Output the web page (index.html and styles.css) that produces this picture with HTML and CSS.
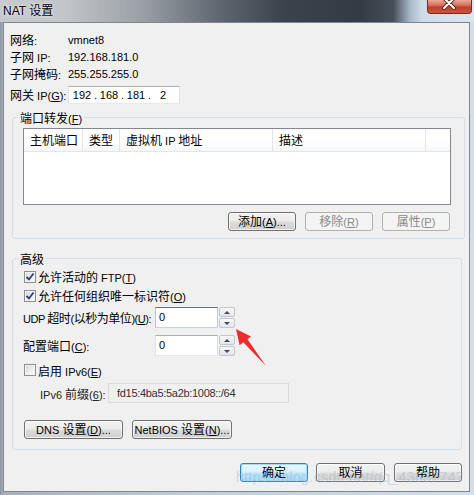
FILE: index.html
```html
<!DOCTYPE html>
<html lang="zh-CN">
<head>
<meta charset="utf-8">
<title>NAT 设置</title>
<link rel="stylesheet" href="styles.css">
</head>
<body>
<div class="window">
  <div class="titlebar">
    <span class="title">NAT <span class="z">设置</span></span>
    <div class="close">
      <svg width="45" height="14" viewBox="0 0 45 14">
        <path d="M17.5 -2 L27.5 8 M27.5 -2 L17.5 8" stroke="#5a2018" stroke-width="4" stroke-linecap="round"/>
        <path d="M17.5 -2 L27.5 8 M27.5 -2 L17.5 8" stroke="#ffffff" stroke-width="2.2" stroke-linecap="round"/>
      </svg>
    </div>
  </div>
  <div class="client">
    <div class="info">
      <div class="row"><span class="lbl"><span class="z">网络</span>:</span><span>vmnet8</span></div>
      <div class="row"><span class="lbl"><span class="z">子网</span> IP:</span><span>192.168.181.0</span></div>
      <div class="row"><span class="lbl"><span class="z">子网掩码</span>:</span><span>255.255.255.0</span></div>
      <div class="row gw">
        <span class="lbl"><span class="z">网关</span> IP(<u>G</u>):</span>
        <div class="ipbox"><span class="oct">192</span><span class="dot">.</span><span class="oct">168</span><span class="dot">.</span><span class="oct">181</span><span class="dot">.</span><span class="oct">2</span></div>
      </div>
    </div>

    <fieldset class="group fwd">
      <legend><span class="z">端口转发</span>(<u>F</u>)</legend>
      <div class="list">
        <div class="lhead">
          <span class="c1 z">主机端口</span>
          <span class="c2 z">类型</span>
          <span class="c3"><span class="z">虚拟机</span> IP <span class="z">地址</span></span>
          <span class="c4 z">描述</span>
          <span class="c5"></span>
        </div>
        <div class="lbody"></div>
      </div>
      <div class="btnrow">
        <button class="btn"><span class="z">添加</span>(<u>A</u>)...</button>
        <button class="btn off"><span class="z">移除</span>(<u>R</u>)</button>
        <button class="btn off"><span class="z">属性</span>(<u>P</u>)</button>
      </div>
    </fieldset>

    <fieldset class="group adv">
      <legend><span class="z">高级</span></legend>
      <div class="chk"><span class="cb"><svg width="10" height="10" viewBox="0 0 10 10"><path d="M1.5 5 L4 7.5 L8.5 1.5" fill="none" stroke="#2c3e6e" stroke-width="1.8"/></svg></span><span><span class="z">允许活动的</span> FTP(<u>T</u>)</span></div>
      <div class="chk"><span class="cb"><svg width="10" height="10" viewBox="0 0 10 10"><path d="M1.5 5 L4 7.5 L8.5 1.5" fill="none" stroke="#2c3e6e" stroke-width="1.8"/></svg></span><span><span class="z">允许任何组织唯一标识符</span>(<u>O</u>)</span></div>

      <div class="frow udp">
        <span class="flbl tight">UDP <span class="z">超时</span>(<span class="z">以秒为单位</span>)(<u>U</u>):</span>
        <div class="tb focus">0</div>
        <div class="spin"><span><i class="up"></i></span><span><i class="down"></i></span></div>
      </div>
      <div class="frow port">
        <span class="flbl"><span class="z">配置端口</span>(<u>C</u>):</span>
        <div class="tb">0</div>
        <div class="spin"><span><i class="up"></i></span><span><i class="down"></i></span></div>
      </div>

      <div class="chk v6"><span class="cb"></span><span><span class="z">启用</span> IPv6(<u>E</u>)</span></div>
      <div class="prow">
        <span class="plbl">IPv6 <span class="z">前缀</span>(<u>6</u>):</span>
        <div class="ro">fd15:4ba5:5a2b:1008::/64</div>
      </div>

      <div class="dnsrow">
        <button class="btn dns">DNS <span class="z">设置</span>(<u>D</u>)...</button>
        <button class="btn nb">NetBIOS <span class="z">设置</span>(<u>N</u>)...</button>
      </div>
    </fieldset>

    <div class="footer">
      <button class="btn def"><span class="z">确定</span></button>
      <button class="btn cancel"><span class="z">取消</span></button>
      <button class="btn"><span class="z">帮助</span></button>
    </div>
  </div>

  <svg class="arrow" width="474" height="495" viewBox="0 0 474 495">
    <polygon points="236,329 251,336.5 247.5,339.3 266,366 243.3,342.3 239.6,345.3" fill="#ef2b2b"/>
  </svg>
  <div class="watermark">https://blog.csdn.net/qq_43637747</div>
</div>
</body>
</html>
```

FILE: styles.css
```css
* { box-sizing: border-box; }
html, body { margin: 0; padding: 0; }
body {
  width: 474px;
  height: 495px;
  overflow: hidden;
  font-family: "Liberation Sans", "Noto Sans CJK SC", sans-serif;
  font-size: 11px;
  color: #000;
}
.z { font-size: 12px; font-family: "Noto Sans CJK SC", "Liberation Sans", sans-serif; }
u { text-decoration: underline; text-underline-offset: 1px; }

.window {
  position: relative;
  width: 474px;
  height: 495px;
  display: flex;
  flex-direction: column;
  background: linear-gradient(90deg, #8c949c 0, #a6b0ba 3px, #bfccd9 40%, #d2deea 100%);
}

.titlebar {
  height: 22px;
  flex: none;
  display: flex;
  justify-content: space-between;
  align-items: flex-start;
  background: linear-gradient(90deg, #c6c9cd 0%, #c1c4c8 14%, #9aa0a6 30%, #5f6770 46%, #3a424b 60%, #333b44 76%, #47505a 83%, #a7b7c6 86.5%, #cfdce8 89%, #dbe6ef 100%);
}
.title {
  font-size: 12px;
  line-height: 18px;
  padding-left: 3px;
  margin-top: 1px;
  color: #000;
  text-shadow: 0 0 4px #eef0f2, 0 0 2px #eef0f2;
}
.close {
  width: 45px;
  height: 14px;
  margin-right: 2px;
  border: 1px solid #7c2a20;
  border-top: none;
  border-radius: 0 0 4px 4px;
  background: linear-gradient(#e8a898 0%, #d7705c 40%, #c13f2a 55%, #c8553c 100%);
  overflow: hidden;
  display: flex;
  justify-content: center;
}
.close svg { display: block; margin-left: -1px; }

.client {
  flex: 1;
  margin: 0 4px 3px 3px;
  border: 1px solid #7e868e;
  background: #f0f0f0;
  display: flex;
  flex-direction: column;
}

/* info rows */
.info { padding: 9px 0 0 6px; }
.row { display: flex; align-items: center; height: 17px; line-height: 17px; }
.lbl { width: 58px; flex: none; white-space: nowrap; }
.row.gw { height: 18px; margin-top: 3px; }
.ipbox {
  width: 112px;
  height: 18px;
  background: #fff;
  border: 1px solid;
  border-color: #abadb3 #dbdfe6 #e3e9ef #e2e3ea;
  display: flex;
  align-items: center;
  padding-left: 3px;
  line-height: 16px;
}
.oct { width: 20px; text-align: center; }
.dot { width: 7px; text-align: center; }

/* group boxes */
fieldset.group {
  margin: 0;
  min-width: 0;
  border: 1px solid #d5dfe5;
  border-radius: 3px;
}
fieldset.group legend {
  padding: 0 2px;
  line-height: 17px;
  height: 17px;
}
.fwd {
  margin: 5px 4px 0 8px !important;
  padding: 0 13px 7px 10px;
}
.fwd legend { margin-left: -5px; }
.adv {
  margin: 11px 7px 0 8px !important;
  padding: 0 10px 10px 11px;
}
.adv legend { margin-left: -6px; }

/* list view */
.list {
  margin-top: 2px;
  height: 77px;
  border: 1px solid #828790;
  background: #fff;
  display: flex;
  flex-direction: column;
}
.lhead {
  height: 23px;
  flex: none;
  display: flex;
  border-bottom: 1px solid #e5e5e5;
  background: linear-gradient(#ffffff 0%, #ffffff 55%, #f6f7f9 100%);
}
.lhead > span {
  border-right: 1px solid #e5e5e5;
  padding-left: 6px;
  line-height: 22px;
  white-space: nowrap;
}
.lhead .c1 { width: 59px; }
.lhead .c2 { width: 37px; }
.lhead .c3 { width: 153px; }
.lhead .c4 { width: 153px; }
.lhead .c5 { flex: 1; border-right: none; }
.lbody { flex: 1; }

/* buttons */
.btn {
  appearance: none;
  -webkit-appearance: none;
  margin: 0;
  padding: 0;
  height: 19px;
  border: 1px solid #707070;
  border-radius: 3px;
  background: linear-gradient(#f3f3f3 0%, #ebebeb 48%, #dddddd 52%, #cfcfcf 100%);
  box-shadow: inset 0 0 0 1px rgba(255,255,255,0.7);
  font-family: "Liberation Sans", "Noto Sans CJK SC", sans-serif;
  font-size: 11px;
  color: #000;
  line-height: 16px;
  text-align: center;
  white-space: nowrap;
}
.btn.off {
  border-color: #adb2b5;
  background: #f4f4f4;
  box-shadow: none;
  color: #8a8a8a;
}
.btnrow {
  margin-top: 7px;
  margin-right: 1px;
  display: flex;
  justify-content: flex-end;
  gap: 9px;
}
.btnrow .btn { width: 68px; }

/* checkboxes */
.chk {
  display: flex;
  align-items: center;
  height: 19px;
  white-space: nowrap;
}
.cb {
  width: 12px;
  height: 12px;
  flex: none;
  margin-right: 2px;
  border: 1px solid #8e8f8f;
  background: linear-gradient(135deg, #d4d6da 0%, #eef0f2 60%, #fbfbfb 100%);
  box-shadow: inset 0 0 0 1px #f4f4f4;
  display: flex;
  align-items: center;
  justify-content: center;
}
.cb svg { display: block; }

/* numeric fields */
.frow {
  display: flex;
  align-items: stretch;
  height: 21px;
}
.frow.udp { margin-top: 2px; }
.frow.port { margin-top: 7px; }
.flbl {
  width: 131px;
  flex: none;
  line-height: 21px;
  white-space: nowrap;
  margin-left: -1px;
}
.flbl.tight { letter-spacing: -0.45px; }
.tb {
  width: 63px;
  height: 21px;
  margin-left: 1px;
  background: #fff;
  border: 1px solid;
  border-color: #abadb3 #dbdfe6 #e3e9ef #e2e3ea;
  padding: 1px 0 0 3px;
  line-height: 16px;
}
.tb.focus { border-color: #3d7bad #b5cfe7 #b7d9ed #a4c9e3; }
.spin {
  width: 16px;
  margin-left: 1px;
  display: flex;
  flex-direction: column;
  gap: 1px;
}
.spin > span {
  flex: 1;
  border: 1px solid #c3c6ca;
  border-radius: 2px;
  background: linear-gradient(#f8f8f8, #e4e5e7);
  display: flex;
  align-items: center;
  justify-content: center;
}
.spin i { width: 0; height: 0; border-left: 3px solid transparent; border-right: 3px solid transparent; }
.spin i.up { border-bottom: 3px solid #3b4a66; }
.spin i.down { border-top: 3px solid #3b4a66; }

.chk.v6 { margin-top: 5px; height: 18px; }

.prow {
  display: flex;
  align-items: center;
  height: 20px;
  margin-top: 4px;
  padding-left: 16px;
}
.plbl { width: 68px; flex: none; white-space: nowrap; color: #222; }
.ro {
  width: 181px;
  height: 20px;
  border: 1px solid #d9dbde;
  background: #f0f0f0;
  padding-left: 8px;
  line-height: 18px;
  color: #333;
  letter-spacing: -0.3px;
}

.dnsrow {
  margin-top: 17px;
  display: flex;
  gap: 9px;
}
.btn.dns { width: 99px; }
.btn.nb { width: 100px; }

/* footer */
.footer {
  margin-top: 13px;
  padding-right: 7px;
  display: flex;
  justify-content: flex-end;
  gap: 8px;
}
.footer .btn { width: 68px; }
.footer .btn.cancel { width: 69px; margin-right: 1px; }
.btn.def {
  border-color: #3c7fb1;
  box-shadow: inset 0 0 0 1px #a6dcf6;
  background: linear-gradient(#eaf6fd 0%, #d9f0fc 48%, #bee6fd 52%, #a7d9f5 100%);
}

/* overlays */
.arrow {
  position: absolute;
  left: 0;
  top: 0;
  pointer-events: none;
}
.watermark {
  position: absolute;
  left: 236px;
  top: 469px;
  font-family: "Liberation Sans", sans-serif;
  font-size: 14px;
  letter-spacing: 0.4px;
  color: rgba(150, 170, 195, 0.4);
  white-space: nowrap;
  pointer-events: none;
}
```
